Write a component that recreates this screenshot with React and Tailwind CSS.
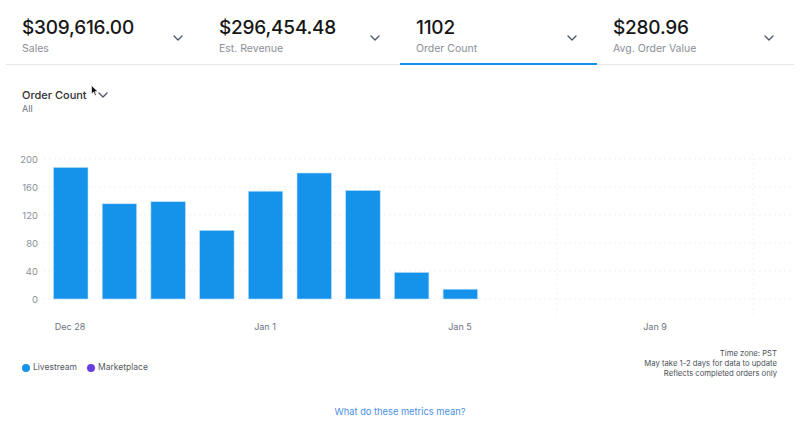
import React from "react";

const tabs = [
  { value: "$309,616.00", label: "Sales" },
  { value: "$296,454.48", label: "Est. Revenue" },
  { value: "1102", label: "Order Count", active: true },
  { value: "$280.96", label: "Avg. Order Value" },
];

const bars = [188, 136, 139, 98, 154, 180, 155, 38, 14];

function Chevron({ className = "" }) {
  return (
    <svg width="10" height="6" viewBox="0 0 10 6" className={className}>
      <path d="M1 1l4 4 4-4" fill="none" stroke="#4b5563" strokeWidth="1.3" strokeLinecap="round" strokeLinejoin="round" />
    </svg>
  );
}

function Chart() {
  const top = 145;
  const y = (v) => 299 - top - 0.7 * v;
  const ticks = [200, 160, 120, 80, 40, 0];
  const xLabels = [
    { t: "Dec 28", x: 70 },
    { t: "Jan 1", x: 265 },
    { t: "Jan 5", x: 460 },
    { t: "Jan 9", x: 655 },
  ];
  return (
    <svg width="800" height="190" viewBox="0 0 800 190" className="block">
      {ticks.map((t) => (
        <g key={t}>
          <line x1="44" x2="792" y1={y(t)} y2={y(t)} stroke="#efefef" strokeWidth="1" strokeDasharray="2 3" />
          <text x="38" y={y(t) + 3.5} textAnchor="end" fontSize="9.5" fill="#8a8f98" fontFamily="Inter, sans-serif">
            {t}
          </text>
        </g>
      ))}
      <line x1="557" x2="557" y1="8" y2="172" stroke="#f2f2f2" strokeDasharray="2 3" />
      <line x1="753" x2="753" y1="8" y2="172" stroke="#f2f2f2" strokeDasharray="2 3" />
      {bars.map((v, i) => {
        const x = 53.5 + i * 48.7;
        return (
          <rect key={i} x={x} y={y(v)} width="34.5" height={0.7 * v} fill="#1592e9" stroke="#bfe0fb" strokeWidth="0.6" />
        );
      })}
      {xLabels.map((l) => (
        <text key={l.t} x={l.x} y="185" textAnchor="middle" fontSize="9" fill="#6b7280" fontFamily="Inter, sans-serif">
          {l.t}
        </text>
      ))}
    </svg>
  );
}

export default function App() {
  return (
    <div className="w-[800px] h-[442px] bg-white overflow-hidden text-[#1f1f1f]" style={{ fontFamily: "Inter, 'Noto Sans', sans-serif" }}>
      <div className="mx-[6px] flex border-b border-[#e5e7eb]">
        {tabs.map((t) => (
          <div key={t.label} className="relative flex-1 flex items-center justify-between pl-4 pr-[20px] pt-[15px] pb-[8px]">
            <div className="flex flex-col">
              <span className="text-[19px] leading-[26px] font-medium tracking-[-0.2px] text-[#161616]">{t.value}</span>
              <span className="text-[10.5px] leading-[14px] text-[#8b8f96] mt-[1px]">{t.label}</span>
            </div>
            <Chevron className="mt-[4px]" />
            {t.active && <div className="absolute left-0 right-0 -bottom-[1px] h-[2px] bg-[#1592e9]" />}
          </div>
        ))}
      </div>

      <div className="pl-[22px] pt-[22px] flex items-center gap-[6px]">
        <span className="text-[11px] leading-[16px] font-medium text-[#2f2f2f]">Order Count</span>
        <span className="relative ml-[5px]">
          <Chevron />
          <svg width="8" height="12" viewBox="0 0 8 12" className="absolute -left-[7px] -top-[7px]">
            <path d="M0.5 0.5 L0.5 9 L2.6 7 L4 10.5 L5.3 10 L3.9 6.6 L6.8 6.6 Z" fill="#111" stroke="#fff" strokeWidth="0.6" />
          </svg>
        </span>
      </div>
      <div className="pl-[22px] text-[9px] leading-[12px] text-[#6b7280]">All</div>

      <div className="mt-[30px]">
        <Chart />
      </div>

      <div className="flex justify-between items-end pl-[22px] pr-[23px] mt-[14px]">
        <div className="flex items-center gap-[10px] text-[8.5px] text-[#555b63] mb-[5px]">
          <span className="flex items-center gap-[3px]">
            <span className="w-[8px] h-[8px] rounded-full bg-[#1592e9]" />
            Livestream
          </span>
          <span className="flex items-center gap-[3px]">
            <span className="w-[8px] h-[8px] rounded-full bg-[#6a3be6]" />
            Marketplace
          </span>
        </div>
        <div className="flex flex-col items-end text-[7.7px] leading-[10px] text-[#4b5058]">
          <span>Time zone: PST</span>
          <span>May take 1-2 days for data to update</span>
          <span>Reflects completed orders only</span>
        </div>
      </div>

      <div className="mt-[26px] text-center text-[9.3px] text-[#4a90e2]">What do these metrics mean?</div>
    </div>
  );
}
